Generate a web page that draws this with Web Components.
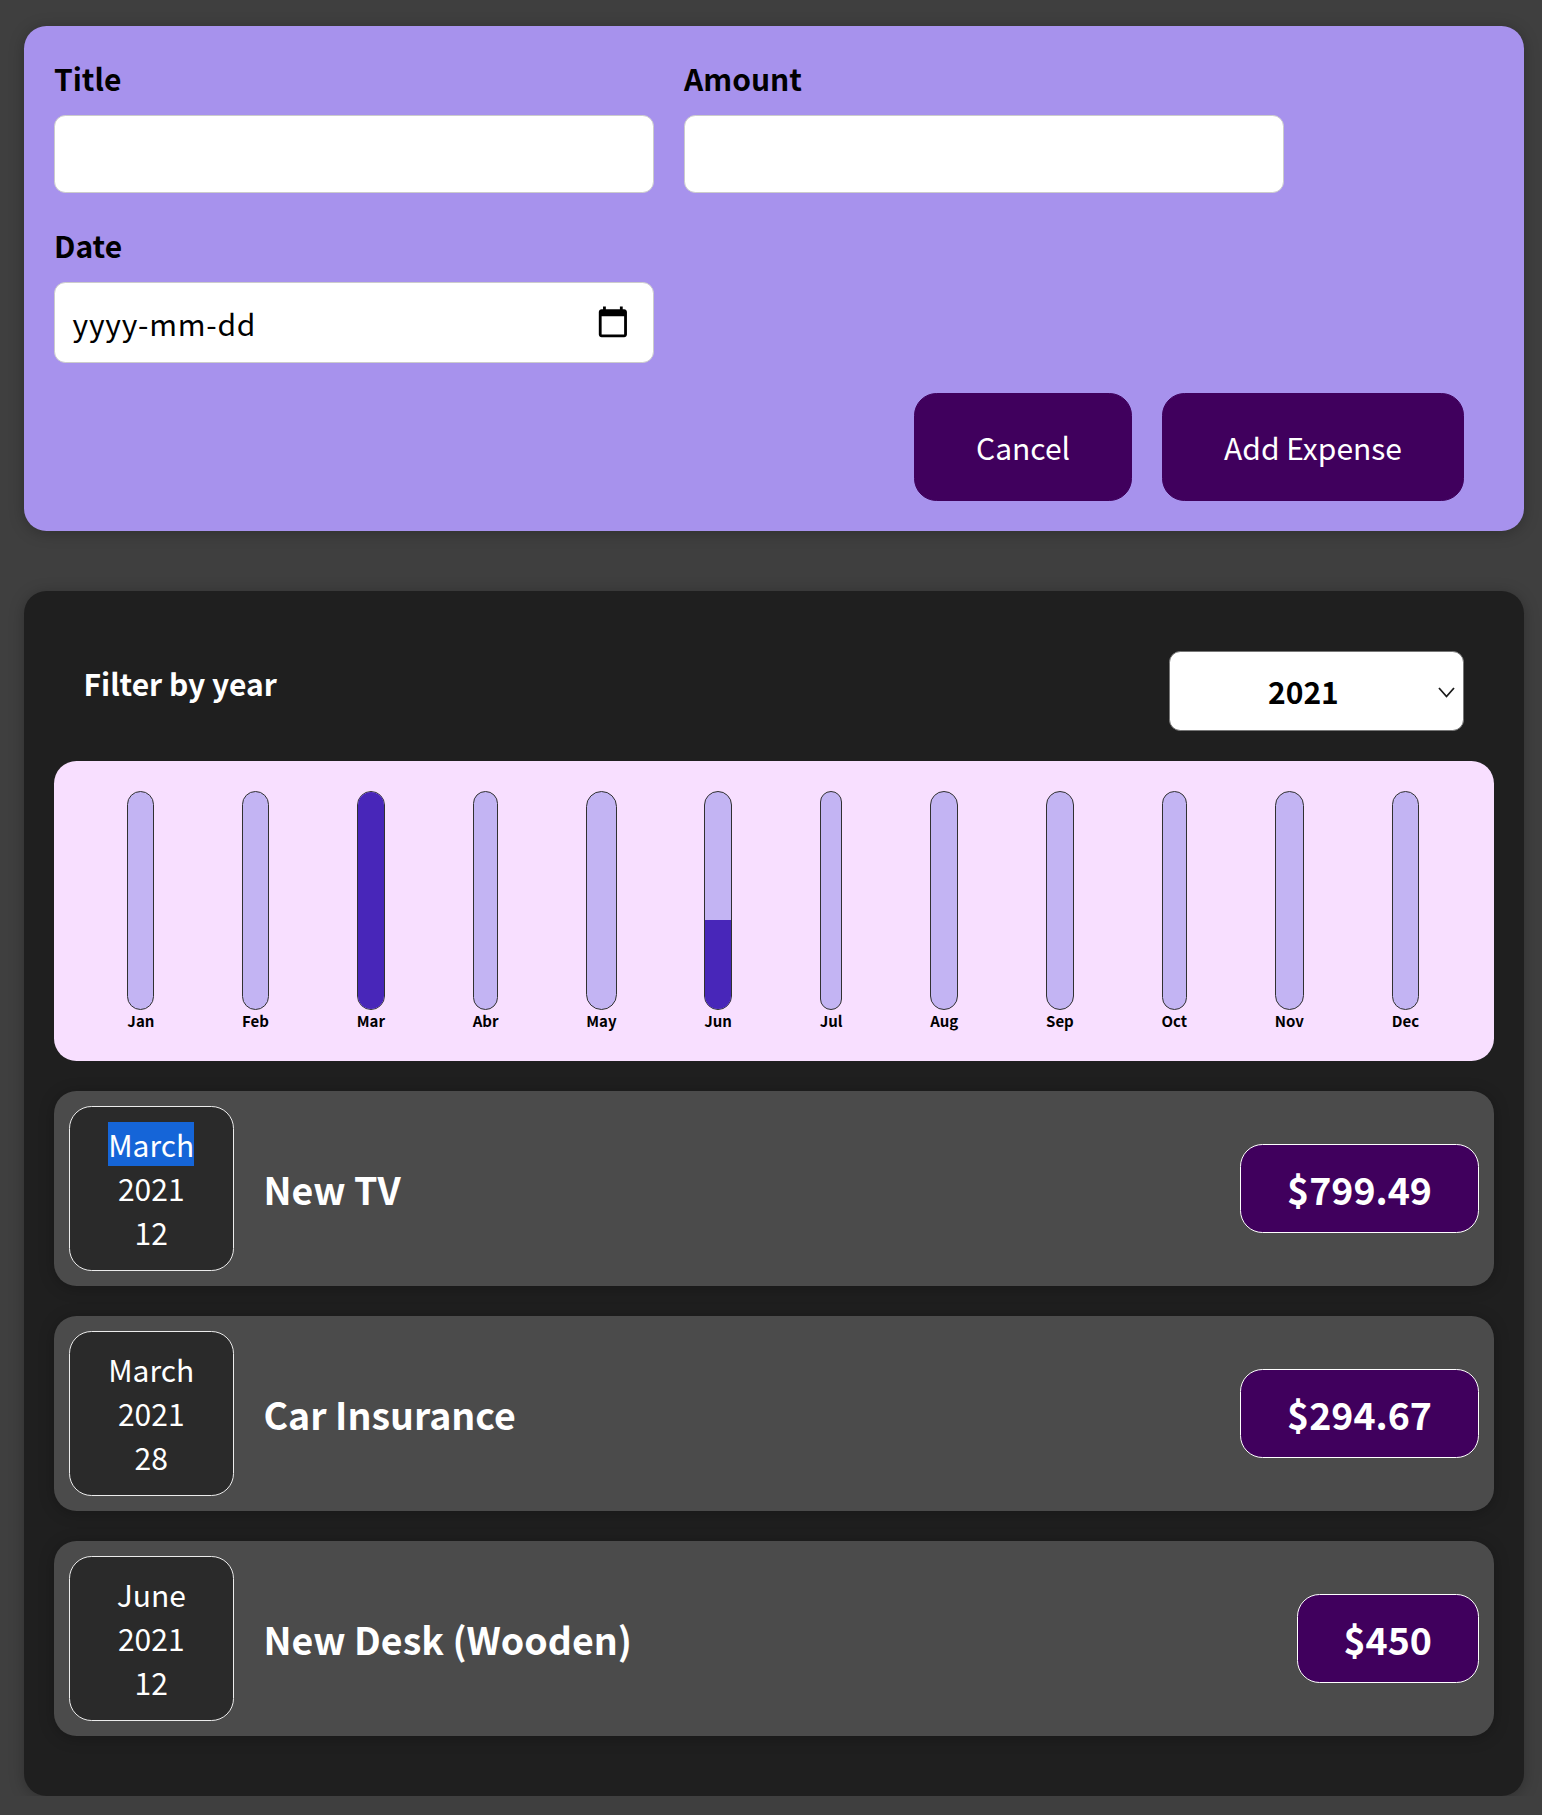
<!DOCTYPE html>
<html lang="en">
<head>
<meta charset="utf-8">
<title>Expenses</title>
<style>
  html { font-size: 30px; }
  body {
    margin: 0;
    padding: 26px 18px 0 24px;
    background: #3f3f3f;
    font-family: "Noto Sans CJK JP", "Noto Sans", sans-serif;
    font-size: 1rem;
    overflow: hidden;
  }
</style>
</head>
<body>
<expense-app>
  <expense-form></expense-form>
  <expense-card>
    <expense-filter year="2021"></expense-filter>
    <expense-chart>
      <chart-bar label="Jan" fill="0"></chart-bar>
      <chart-bar label="Feb" fill="0"></chart-bar>
      <chart-bar label="Mar" fill="100"></chart-bar>
      <chart-bar label="Abr" fill="0"></chart-bar>
      <chart-bar label="May" fill="0"></chart-bar>
      <chart-bar label="Jun" fill="41"></chart-bar>
      <chart-bar label="Jul" fill="0"></chart-bar>
      <chart-bar label="Aug" fill="0"></chart-bar>
      <chart-bar label="Sep" fill="0"></chart-bar>
      <chart-bar label="Oct" fill="0"></chart-bar>
      <chart-bar label="Nov" fill="0"></chart-bar>
      <chart-bar label="Dec" fill="0"></chart-bar>
    </expense-chart>
    <expense-item month="March" year="2021" day="12" price="$799.49" selected>New TV</expense-item>
    <expense-item month="March" year="2021" day="28" price="$294.67">Car Insurance</expense-item>
    <expense-item month="June" year="2021" day="12" price="$450">New Desk (Wooden)</expense-item>
  </expense-card>
</expense-app>

<script>
class ExpenseApp extends HTMLElement {
  constructor() {
    super();
    this.attachShadow({ mode: 'open' });
    this.shadowRoot.innerHTML = `
      <style>
        :host { display: flex; flex-direction: column; gap: 2rem; width: 50rem; }
      </style>
      <slot></slot>
    `;
  }
}

class FormField extends HTMLElement {
  constructor() {
    super();
    this.attachShadow({ mode: 'open' });
    this.shadowRoot.innerHTML = `
      <style>
        :host { display: block; width: 20rem; }
        label { display: block; font-weight: bold; margin-bottom: 14px; line-height: 45px; color: #000; }
      </style>
      <label></label>
      <slot></slot>
    `;
  }

  static get observedAttributes() { return ['label']; }

  attributeChangedCallback() {
    this.shadowRoot.querySelector('label').textContent = this.getAttribute('label');
  }
}

class TextField extends HTMLElement {
  constructor() {
    super();
    this.attachShadow({ mode: 'open' });
    this.shadowRoot.innerHTML = `
      <style>
        :host { display: block; }
        input {
          display: block;
          box-sizing: border-box;
          width: 100%;
          height: 77.5px;
          padding: .5rem;
          font: inherit;
          background: #fff;
          border: 1px solid #ccc;
          border-radius: 11.25px;
        }
      </style>
      <input type="text">
    `;
  }
}

class DateField extends HTMLElement {
  constructor() {
    super();
    this.attachShadow({ mode: 'open' });
    this.shadowRoot.innerHTML = `
      <style>
        :host { display: block; }
        .box {
          box-sizing: border-box;
          height: 81px;
          display: flex;
          align-items: center;
          justify-content: space-between;
          padding: 0 23px 0 17.5px;
          background: #fff;
          color: #000;
          border: 1px solid #ccc;
          border-radius: 11.25px;
        }
        span { padding-top: 1px; letter-spacing: .75px; }
        svg { width: 33.75px; height: 33.75px; fill: #000; }
      </style>
      <div class="box">
        <span>yyyy-mm-dd</span>
        <svg viewBox="0 0 24 24"><path d="M20 3h-1V1h-2v2H7V1H5v2H4c-1.1 0-2 .9-2 2v16c0 1.1.9 2 2 2h16c1.1 0 2-.9 2-2V5c0-1.1-.9-2-2-2zm0 18H4V8h16v13z"/></svg>
      </div>
    `;
  }
}

class ExpenseForm extends HTMLElement {
  constructor() {
    super();
    this.attachShadow({ mode: 'open' });
    this.shadowRoot.innerHTML = `
      <style>
        :host {
          display: block;
          padding: 1rem;
          background: #a792ed;
          border-radius: 22.5px;
          box-shadow: 0 2px 15px rgba(0, 0, 0, .25);
        }
        .controls { display: flex; flex-wrap: wrap; gap: 30px 1rem; margin-bottom: 1rem; }
        .actions { display: flex; justify-content: flex-end; gap: 1rem; padding-right: 1rem; }
        button {
          font: inherit;
          height: 108.5px;
          padding: 0 61px;
          color: #fff;
          background: #40005d;
          border: 1px solid #40005d;
          border-radius: 22.5px;
          cursor: pointer;
        }
      </style>
      <form>
        <div class="controls">
          <form-field label="Title"><text-field></text-field></form-field>
          <form-field label="Amount"><text-field></text-field></form-field>
          <form-field label="Date"><date-field></date-field></form-field>
        </div>
        <div class="actions">
          <button type="button">Cancel</button>
          <button type="button">Add Expense</button>
        </div>
      </form>
    `;
  }
}

class ExpenseCard extends HTMLElement {
  constructor() {
    super();
    this.attachShadow({ mode: 'open' });
    this.shadowRoot.innerHTML = `
      <style>
        :host {
          display: flex;
          flex-direction: column;
          gap: 1rem;
          padding: 2rem 1rem;
          background: #1f1f1f;
          border-radius: 22.5px;
          box-shadow: 0 2px 15px rgba(0, 0, 0, .25);
        }
      </style>
      <slot></slot>
    `;
  }
}

class ExpenseFilter extends HTMLElement {
  constructor() {
    super();
    this.attachShadow({ mode: 'open' });
    this.shadowRoot.innerHTML = `
      <style>
        :host {
          display: flex;
          align-items: center;
          justify-content: space-between;
          padding: 0 1rem;
          color: #fff;
        }
        label { font-weight: bold; margin: 0 0 17px -.5px; }
        .select {
          box-sizing: border-box;
          position: relative;
          width: 295px;
          height: 80px;
          display: flex;
          align-items: center;
          padding: 0 0 1px 98px;
          color: #000;
          font-weight: bold;
          background: #fff;
          border: 1px solid #767676;
          border-radius: 11.25px;
        }
        svg { position: absolute; right: 8px; top: 35px; width: 17px; height: 11px; }
      </style>
      <label>Filter by year</label>
      <div class="select">
        <span class="value"></span>
        <svg viewBox="0 0 17 11"><path d="M1 1l7.5 8.5L16 1" fill="none" stroke="#1a1a1a" stroke-width="1.8"/></svg>
      </div>
    `;
  }

  static get observedAttributes() { return ['year']; }

  attributeChangedCallback() {
    this.shadowRoot.querySelector('.value').textContent = this.getAttribute('year');
  }
}

class ExpenseChart extends HTMLElement {
  constructor() {
    super();
    this.attachShadow({ mode: 'open' });
    this.shadowRoot.innerHTML = `
      <style>
        :host {
          display: flex;
          justify-content: space-around;
          box-sizing: border-box;
          height: 10rem;
          padding: 1rem 31px 1rem 29.5px;
          background: #f8dfff;
          border-radius: 22.5px;
        }
      </style>
      <slot></slot>
    `;
  }
}

class ChartBar extends HTMLElement {
  constructor() {
    super();
    this.attachShadow({ mode: 'open' });
    this.shadowRoot.innerHTML = `
      <style>
        :host { display: flex; flex-direction: column; align-items: center; height: 100%; }
        .track {
          box-sizing: border-box;
          flex: 1;
          width: 100%;
          display: flex;
          flex-direction: column;
          justify-content: flex-end;
          overflow: hidden;
          background: #c3b4f3;
          border: 1px solid #313131;
          border-radius: 22.5px;
        }
        .fill { background: #4826b9; }
        .label { padding-top: 1px; font-size: .5rem; font-weight: bold; line-height: 20.5px; color: #000; text-align: center; }
      </style>
      <div class="track"><div class="fill"></div></div>
      <div class="label"></div>
    `;
  }

  static get observedAttributes() { return ['label', 'fill']; }

  attributeChangedCallback() {
    this.shadowRoot.querySelector('.label').textContent = this.getAttribute('label');
    this.shadowRoot.querySelector('.fill').style.height = this.getAttribute('fill') + '%';
  }
}

class ExpenseDate extends HTMLElement {
  constructor() {
    super();
    this.attachShadow({ mode: 'open' });
    this.shadowRoot.innerHTML = `
      <style>
        :host {
          box-sizing: border-box;
          flex: none;
          display: flex;
          flex-direction: column;
          align-items: center;
          justify-content: center;
          width: 164.5px;
          height: 165px;
          padding-bottom: 2px;
          color: #fff;
          background: #2a2a2a;
          border: 1px solid #ececec;
          border-radius: 22.5px;
        }
        div { line-height: 44px; }
        .selected { background: #1565d8; }
      </style>
      <div class="month"></div>
      <div class="year"></div>
      <div class="day"></div>
    `;
  }

  static get observedAttributes() { return ['month', 'year', 'day', 'selected']; }

  attributeChangedCallback() {
    const month = this.shadowRoot.querySelector('.month');
    month.textContent = this.getAttribute('month');
    month.classList.toggle('selected', this.hasAttribute('selected'));
    this.shadowRoot.querySelector('.year').textContent = this.getAttribute('year');
    this.shadowRoot.querySelector('.day').textContent = this.getAttribute('day');
  }
}

class ExpenseItem extends HTMLElement {
  constructor() {
    super();
    this.attachShadow({ mode: 'open' });
    this.shadowRoot.innerHTML = `
      <style>
        :host {
          box-sizing: border-box;
          display: flex;
          align-items: center;
          gap: 1rem;
          height: 195px;
          padding: .5rem;
          background: #4b4b4b;
          border-radius: 22.5px;
          box-shadow: 0 2px 15px rgba(0, 0, 0, .25);
        }
        .description { flex: 1; display: flex; align-items: center; justify-content: space-between; }
        h2 { margin: 0; font-size: 1.25rem; font-weight: bold; color: #fff; }
        .price {
          box-sizing: border-box;
          height: 89px;
          display: flex;
          align-items: center;
          padding: 0 46px;
          font-size: 1.25rem;
          font-weight: bold;
          color: #fff;
          background: #40005d;
          border: 1px solid #fff;
          border-radius: 22.5px;
        }
      </style>
      <expense-date></expense-date>
      <div class="description">
        <h2><slot></slot></h2>
        <div class="price"></div>
      </div>
    `;
  }

  connectedCallback() {
    const date = this.shadowRoot.querySelector('expense-date');
    date.setAttribute('month', this.getAttribute('month'));
    date.setAttribute('year', this.getAttribute('year'));
    date.setAttribute('day', this.getAttribute('day'));
    if (this.hasAttribute('selected')) date.setAttribute('selected', '');
    this.shadowRoot.querySelector('.price').textContent = this.getAttribute('price');
  }
}

customElements.define('expense-date', ExpenseDate);
customElements.define('expense-item', ExpenseItem);
customElements.define('form-field', FormField);
customElements.define('text-field', TextField);
customElements.define('date-field', DateField);
customElements.define('expense-form', ExpenseForm);
customElements.define('expense-card', ExpenseCard);
customElements.define('expense-filter', ExpenseFilter);
customElements.define('chart-bar', ChartBar);
customElements.define('expense-chart', ExpenseChart);
customElements.define('expense-app', ExpenseApp);
</script>
</body>
</html>
